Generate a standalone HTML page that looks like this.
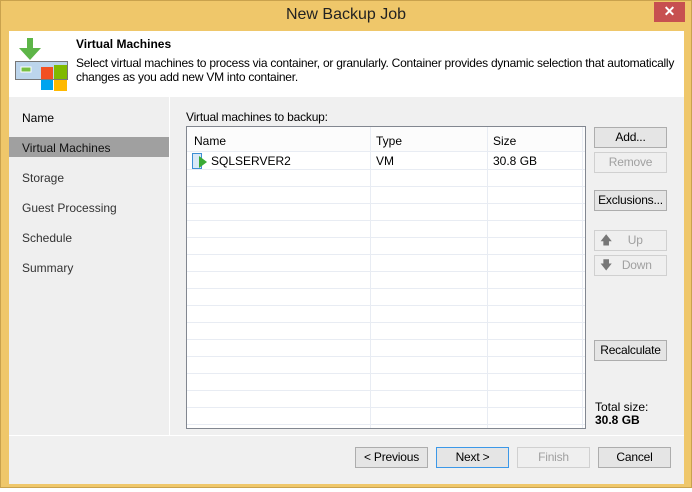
<!DOCTYPE html>
<html><head><style>
*{margin:0;padding:0;box-sizing:border-box}
body{width:692px;height:492px;background:#fff;font-family:"Liberation Sans",sans-serif;font-size:12px;color:#000;position:relative;overflow:hidden}
.a{position:absolute}
.btn{position:absolute;width:73px;height:21px;border:1px solid #adadad;background:#e5e5e5;text-align:center;line-height:19px;font-size:12px;letter-spacing:-0.2px}
.dis{color:#a0a0a0;border-color:#d0d0d0;background:#efefef}
.nav{position:absolute;left:22px;font-size:12px;color:#333}
</style></head><body>
<div class="a" style="left:0;top:0;width:692px;height:488px;background:#efc76a;border:1px solid #c9a24d"></div>
<div class="a" style="left:0;top:6px;width:692px;text-align:center;font-size:16px;color:#222">New Backup Job</div>
<div class="a" style="left:654px;top:2px;width:31px;height:20px;background:#c75050;color:#fff;text-align:center;line-height:19px;font-size:14px;font-weight:bold">✕</div>
<div class="a" style="left:9px;top:31px;width:675px;height:453px;background:#f0f0f0"></div>
<div class="a" style="left:9px;top:31px;width:675px;height:66px;background:#fff"></div>
<svg class="a" style="left:14px;top:36px" width="56" height="56">
<rect x="1.5" y="25.5" width="52" height="18" fill="#bcd5ec" stroke="#777"/>
<rect x="7" y="31" width="10" height="5" fill="#77c043" stroke="#fff"/>
<rect x="13" y="2" width="6" height="14" fill="#5db548"/>
<polygon points="5,12 27,12 16,24" fill="#5db548"/>
<rect x="27" y="31" width="12" height="12" fill="#f25022"/>
<rect x="40" y="29" width="13" height="14" fill="#7fba00"/>
<rect x="27" y="44" width="12" height="10" fill="#00a4ef"/>
<rect x="40" y="44" width="13" height="11" fill="#ffb900"/>
</svg>
<div class="a" style="left:76px;top:37px;font-weight:bold;font-size:12px">Virtual Machines</div>
<div class="a" style="left:76px;top:56px;width:612px;line-height:14px;font-size:12px;letter-spacing:-0.25px">Select virtual machines to process via container, or granularly. Container provides dynamic selection that automatically changes as you add new VM into container.</div>
<div class="a" style="left:9px;top:97px;width:160px;height:338px;background:#efefef"></div>
<div class="a" style="left:169px;top:97px;width:1px;height:338px;background:#fff"></div>
<div class="a" style="left:9px;top:137px;width:160px;height:20px;background:#a0a0a0"></div>
<div class="nav" style="top:111px;color:#000">Name</div>
<div class="nav" style="top:141px;color:#111">Virtual Machines</div>
<div class="nav" style="top:171px">Storage</div>
<div class="nav" style="top:201px">Guest Processing</div>
<div class="nav" style="top:231px">Schedule</div>
<div class="nav" style="top:261px">Summary</div>
<div class="a" style="left:186px;top:110px;letter-spacing:-0.2px">Virtual machines to backup:</div>
<div class="a" style="left:186px;top:126px;width:400px;height:303px;background:#fff;border:1px solid #828790;overflow:hidden">
<div class="a" style="left:0;top:0;width:400px;height:25px;background:#fcfcfc;border-bottom:1px solid #e8ecf3"></div>
<div class="a" style="left:183px;top:0;width:1px;height:303px;background:#e8ecf3"></div>
<div class="a" style="left:300px;top:0;width:1px;height:303px;background:#e8ecf3"></div>
<div class="a" style="left:395px;top:0;width:1px;height:303px;background:#e8ecf3"></div>
<div class="a" style="left:7px;top:7px">Name</div><div class="a" style="left:189px;top:7px">Type</div><div class="a" style="left:306px;top:7px">Size</div>
<div class="a" style="left:5px;top:26px;width:10px;height:16px;border:1px solid #3d8fd4;background:#d9e9f7"></div>
<div class="a" style="left:12px;top:29px;width:0;height:0;border-left:8px solid #3aaa35;border-top:6px solid transparent;border-bottom:6px solid transparent"></div>
<div class="a" style="left:24px;top:27px">SQLSERVER2</div><div class="a" style="left:189px;top:27px">VM</div><div class="a" style="left:306px;top:27px">30.8 GB</div>
<div class="a" style="left:0;top:42px;width:400px;height:260px;background:repeating-linear-gradient(to bottom,#e8ecf3 0 1px,transparent 1px 17px)"></div>
</div>
<div class="btn" style="left:594px;top:127px">Add...</div>
<div class="btn dis" style="left:594px;top:152px">Remove</div>
<div class="btn" style="left:594px;top:190px">Exclusions...</div>
<div class="btn dis" style="left:594px;top:230px">&nbsp;&nbsp;&nbsp;Up<span class="a" style="left:5px;top:0;color:#777">🡅</span></div>
<div class="btn dis" style="left:594px;top:255px">&nbsp;&nbsp;&nbsp;&nbsp;Down<span class="a" style="left:5px;top:0;color:#777">🡇</span></div>
<div class="btn" style="left:594px;top:340px">Recalculate</div>
<div class="a" style="left:595px;top:400px">Total size:</div>
<div class="a" style="left:595px;top:413px;font-weight:bold">30.8 GB</div>
<div class="a" style="left:9px;top:435px;width:675px;height:1px;background:#fff"></div>
<div class="btn" style="left:355px;top:447px">&lt; Previous</div>
<div class="btn" style="left:436px;top:447px;border-color:#3c98e8">Next &gt;</div>
<div class="btn dis" style="left:517px;top:447px">Finish</div>
<div class="btn" style="left:598px;top:447px">Cancel</div>
</body></html>
